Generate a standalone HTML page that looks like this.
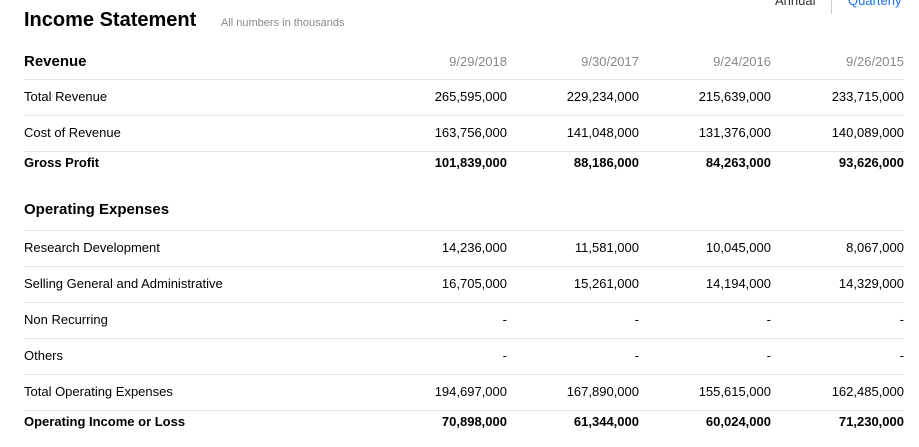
<!DOCTYPE html>
<html><head><style>
body{margin:0;width:919px;height:447px;background:#fff;font-family:"Liberation Sans",Arial,sans-serif;color:#000;position:relative;overflow:hidden}
.a{position:absolute;white-space:nowrap;line-height:16px}
.l{left:24px;font-size:13px}
.n{font-size:13px;text-align:right;width:120px}
.b{font-weight:bold}
.line{position:absolute;left:24px;width:880px;height:1px;background:#e3e3e8}
.g{color:#888}
</style></head><body>
<div class="a b" style="left:24px;top:8px;font-size:20px;line-height:24px">Income Statement</div>
<div class="a g" style="left:221px;top:15px;font-size:11px">All numbers in thousands</div>
<div class="a" style="left:775px;top:-7px;font-size:13px;color:#333">Annual</div>
<div style="position:absolute;left:831px;top:0;width:1px;height:14px;background:#ccc"></div>
<div class="a" style="left:848px;top:-7px;font-size:13px;color:#1a73e8">Quarterly</div>

<div class="a b" style="left:24px;top:54px;font-size:15px">Revenue</div>
<div class="a n g" style="left:387px;top:54px">9/29/2018</div>
<div class="a n g" style="left:519px;top:54px">9/30/2017</div>
<div class="a n g" style="left:651px;top:54px">9/24/2016</div>
<div class="a n g" style="left:784px;top:54px">9/26/2015</div>
<div class="line" style="top:79px"></div>

<div class="a l" style="top:89px">Total Revenue</div>
<div class="a n" style="left:387px;top:89px">265,595,000</div>
<div class="a n" style="left:519px;top:89px">229,234,000</div>
<div class="a n" style="left:651px;top:89px">215,639,000</div>
<div class="a n" style="left:784px;top:89px">233,715,000</div>
<div class="line" style="top:115px"></div>

<div class="a l" style="top:125px">Cost of Revenue</div>
<div class="a n" style="left:387px;top:125px">163,756,000</div>
<div class="a n" style="left:519px;top:125px">141,048,000</div>
<div class="a n" style="left:651px;top:125px">131,376,000</div>
<div class="a n" style="left:784px;top:125px">140,089,000</div>
<div class="line" style="top:151px"></div>

<div class="a l b" style="top:155px">Gross Profit</div>
<div class="a n b" style="left:387px;top:155px">101,839,000</div>
<div class="a n b" style="left:519px;top:155px">88,186,000</div>
<div class="a n b" style="left:651px;top:155px">84,263,000</div>
<div class="a n b" style="left:784px;top:155px">93,626,000</div>

<div class="a b" style="left:24px;top:202px;font-size:15px">Operating Expenses</div>
<div class="line" style="top:230px"></div>

<div class="a l" style="top:240px">Research Development</div>
<div class="a n" style="left:387px;top:240px">14,236,000</div>
<div class="a n" style="left:519px;top:240px">11,581,000</div>
<div class="a n" style="left:651px;top:240px">10,045,000</div>
<div class="a n" style="left:784px;top:240px">8,067,000</div>
<div class="line" style="top:266px"></div>

<div class="a l" style="top:276px">Selling General and Administrative</div>
<div class="a n" style="left:387px;top:276px">16,705,000</div>
<div class="a n" style="left:519px;top:276px">15,261,000</div>
<div class="a n" style="left:651px;top:276px">14,194,000</div>
<div class="a n" style="left:784px;top:276px">14,329,000</div>
<div class="line" style="top:302px"></div>

<div class="a l" style="top:312px">Non Recurring</div>
<div class="a n" style="left:387px;top:312px">-</div>
<div class="a n" style="left:519px;top:312px">-</div>
<div class="a n" style="left:651px;top:312px">-</div>
<div class="a n" style="left:784px;top:312px">-</div>
<div class="line" style="top:338px"></div>

<div class="a l" style="top:348px">Others</div>
<div class="a n" style="left:387px;top:348px">-</div>
<div class="a n" style="left:519px;top:348px">-</div>
<div class="a n" style="left:651px;top:348px">-</div>
<div class="a n" style="left:784px;top:348px">-</div>
<div class="line" style="top:374px"></div>

<div class="a l" style="top:384px">Total Operating Expenses</div>
<div class="a n" style="left:387px;top:384px">194,697,000</div>
<div class="a n" style="left:519px;top:384px">167,890,000</div>
<div class="a n" style="left:651px;top:384px">155,615,000</div>
<div class="a n" style="left:784px;top:384px">162,485,000</div>
<div class="line" style="top:410px"></div>

<div class="a l b" style="top:414px">Operating Income or Loss</div>
<div class="a n b" style="left:387px;top:414px">70,898,000</div>
<div class="a n b" style="left:519px;top:414px">61,344,000</div>
<div class="a n b" style="left:651px;top:414px">60,024,000</div>
<div class="a n b" style="left:784px;top:414px">71,230,000</div>
</body></html>
